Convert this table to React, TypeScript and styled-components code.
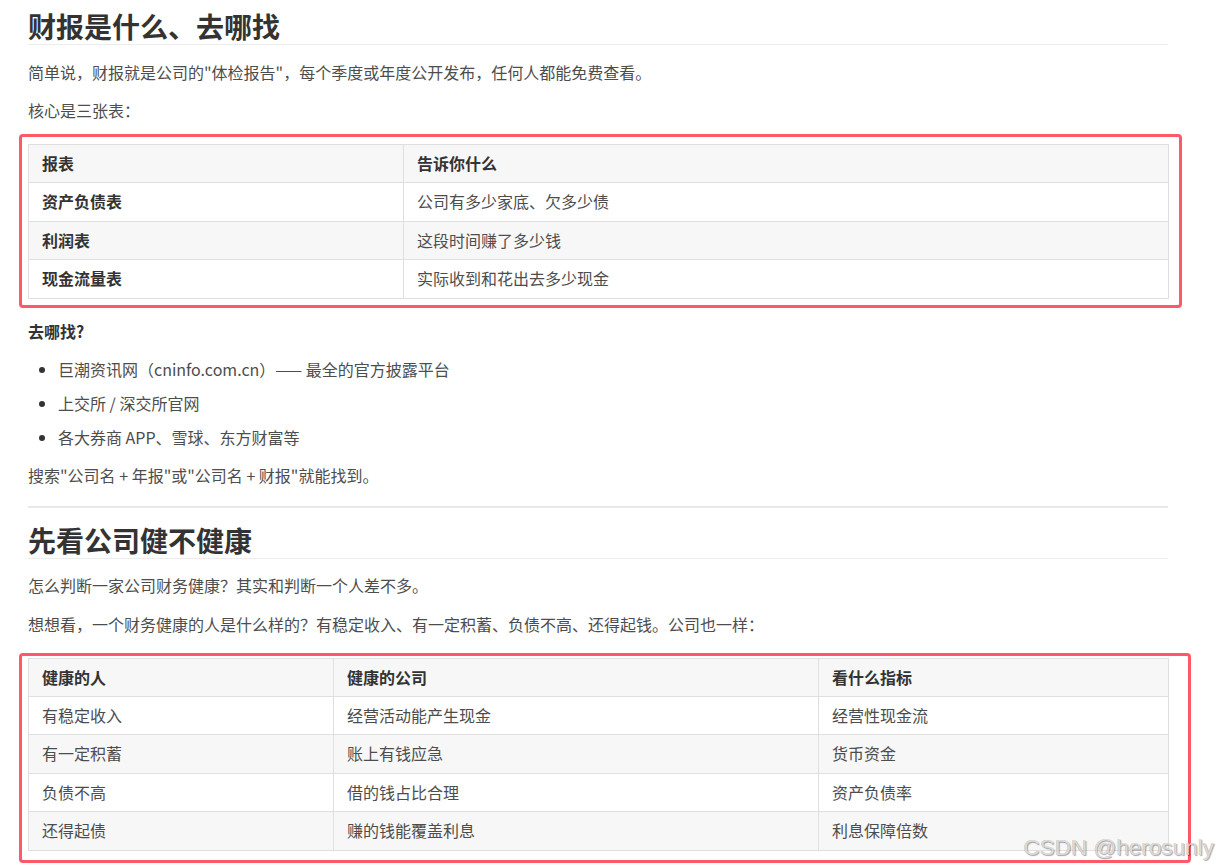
import React from "react";
import styled, { createGlobalStyle } from "styled-components";

const GlobalStyle = createGlobalStyle`
  html, body { margin: 0; padding: 0; background: #ffffff; }
  body {
    font-family: "Noto Sans CJK SC", "Noto Sans", sans-serif;
    color: #4d4d4d;
    -webkit-font-smoothing: antialiased;
  }
`;

const Page = styled.div`
  position: relative;
  width: 1140px;
  height: 868px;
  padding: 0 51px 0 28px;
  overflow: hidden;
`;

const Heading = styled.h1<{ $top: number }>`
  margin: ${(p) => p.$top}px 0 0;
  padding-top: 8px;
  font-size: 28px;
  line-height: 36px;
  font-weight: 700;
  color: #333333;
  border-bottom: 1px solid #ececec;
`;

const Para = styled.p<{ $top: number; $bold?: boolean }>`
  margin: ${(p) => p.$top}px 0 0;
  font-size: 16px;
  line-height: 26px;
  font-weight: ${(p) => (p.$bold ? 700 : 400)};
  color: ${(p) => (p.$bold ? "#333333" : "#4d4d4d")};
`;

const List = styled.ul`
  margin: 12px 0 0;
  padding-left: 30px;
  list-style: disc;
`;

const Item = styled.li`
  font-size: 16px;
  line-height: 26px;
  color: #4d4d4d;
  margin-bottom: 8px;
  &:last-child { margin-bottom: 0; }
  &::marker { color: #333; }
`;

const Rule = styled.hr`
  margin: 18px 0 0;
  border: none;
  height: 2px;
  background: #e8e8e8;
`;

const Marked = styled.div<{ $top: number; $pad: string; $mr: number }>`
  margin: ${(p) => p.$top}px -${(p) => p.$mr}px 0 -9px;
  padding: ${(p) => p.$pad};
  border: 3px solid #ff5868;
  border-radius: 4px;
`;

const Table = styled.table`
  width: 100%;
  border-collapse: collapse;
  table-layout: fixed;
  font-size: 16px;
`;

const Col = styled.col<{ $w: number }>`
  width: ${(p) => p.$w}px;
`;

const Row = styled.tr<{ $shade?: boolean }>`
  background: ${(p) => (p.$shade ? "#f7f7f7" : "#ffffff")};
`;

const Th = styled.th`
  text-align: left;
  font-weight: 700;
  color: #333333;
  padding: 6px 13px;
  line-height: 25.4px;
  border: 1px solid #dfdfdf;
`;

const Td = styled.td<{ $bold?: boolean }>`
  font-weight: ${(p) => (p.$bold ? 700 : 400)};
  color: ${(p) => (p.$bold ? "#333333" : "#4d4d4d")};
  padding: 6px 13px;
  line-height: 25.4px;
  border: 1px solid #dfdfdf;
`;

const Watermark = styled.div`
  position: absolute;
  right: 5px;
  top: 834px;
  font-family: "Liberation Sans", Arial, sans-serif;
  font-size: 22.5px;
  line-height: 28px;
  color: rgba(222, 222, 222, 0.95);
  text-shadow: 1px 1px 1px rgba(0, 0, 0, 0.35), -0.5px -0.5px 0.5px rgba(0, 0, 0, 0.2);
  white-space: nowrap;
`;

const statements = [
  ["资产负债表", "公司有多少家底、欠多少债"],
  ["利润表", "这段时间赚了多少钱"],
  ["现金流量表", "实际收到和花出去多少现金"],
];

const health = [
  ["有稳定收入", "经营活动能产生现金", "经营性现金流"],
  ["有一定积蓄", "账上有钱应急", "货币资金"],
  ["负债不高", "借的钱占比合理", "资产负债率"],
  ["还得起债", "赚的钱能覆盖利息", "利息保障倍数"],
];

export default function App() {
  return (
    <>
      <GlobalStyle />
      <Page>
        <Heading $top={0}>财报是什么、去哪找</Heading>
        <Para $top={14}>
          简单说，财报就是公司的"体检报告"，每个季度或年度公开发布，任何人都能免费查看。
        </Para>
        <Para $top={12}>核心是三张表：</Para>
        <Marked $top={11} $pad="7px 11px 6px 6px" $mr={14}>
          <Table>
            <colgroup>
              <Col $w={375} />
              <Col $w={765} />
            </colgroup>
            <thead>
              <Row $shade>
                <Th>报表</Th>
                <Th>告诉你什么</Th>
              </Row>
            </thead>
            <tbody>
              {statements.map((r, i) => (
                <Row key={r[0]} $shade={i % 2 === 1}>
                  <Td $bold>{r[0]}</Td>
                  <Td>{r[1]}</Td>
                </Row>
              ))}
            </tbody>
          </Table>
        </Marked>
        <Para $top={10} $bold>
          去哪找?
        </Para>
        <List>
          <Item>巨潮资讯网（cninfo.com.cn）—— 最全的官方披露平台</Item>
          <Item>上交所 / 深交所官网</Item>
          <Item>各大券商 APP、雪球、东方财富等</Item>
        </List>
        <Para $top={12}>搜索"公司名 + 年报"或"公司名 + 财报"就能找到。</Para>
        <Rule />
        <Heading $top={6}>先看公司健不健康</Heading>
        <Para $top={13}>怎么判断一家公司财务健康？其实和判断一个人差不多。</Para>
        <Para $top={13}>
          想想看，一个财务健康的人是什么样的？有稳定收入、有一定积蓄、负债不高、还得起钱。公司也一样：
        </Para>
        <Marked $top={16} $pad="2px 20px 9px 6px" $mr={23}>
          <Table>
            <colgroup>
              <Col $w={305} />
              <Col $w={485} />
              <Col $w={350} />
            </colgroup>
            <thead>
              <Row $shade>
                <Th>健康的人</Th>
                <Th>健康的公司</Th>
                <Th>看什么指标</Th>
              </Row>
            </thead>
            <tbody>
              {health.map((r, i) => (
                <Row key={r[0]} $shade={i % 2 === 1}>
                  <Td>{r[0]}</Td>
                  <Td>{r[1]}</Td>
                  <Td>{r[2]}</Td>
                </Row>
              ))}
            </tbody>
          </Table>
        </Marked>
        <Watermark>CSDN @herosunly</Watermark>
      </Page>
    </>
  );
}
